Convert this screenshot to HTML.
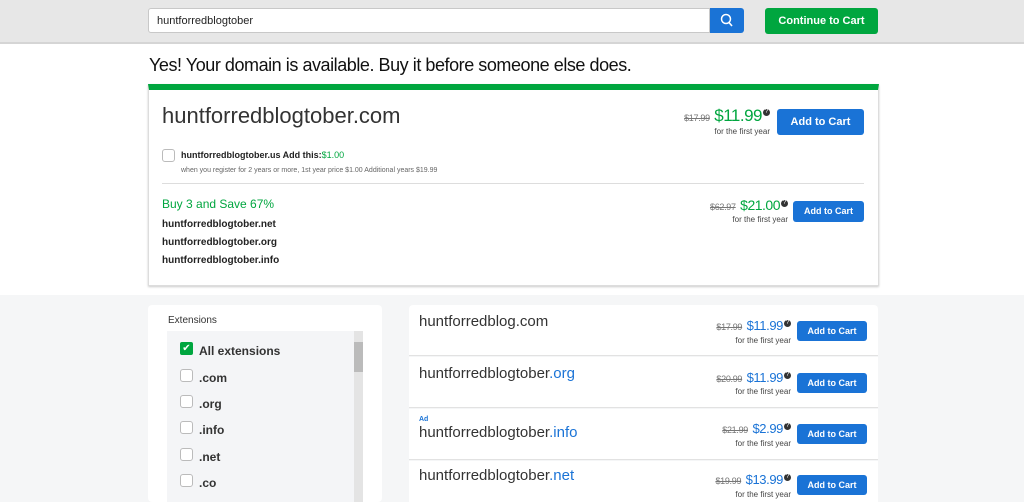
<!DOCTYPE html>
<html><head><meta charset="utf-8"><style>
*{box-sizing:border-box;margin:0;padding:0}
html,body{width:1024px;height:502px;overflow:hidden}
body{background:#fff;font-family:"Liberation Sans",sans-serif;color:#222;position:relative}
.a{position:absolute;white-space:nowrap}
.r{position:absolute;white-space:nowrap;text-align:right}
.btn{position:absolute;background:#1a73d6;color:#fff;border-radius:3px;font-size:11px;font-weight:bold;text-align:center}
.q{display:inline-block;width:7px;height:7px;border-radius:50%;background:#333;color:#fff;font-size:6px;line-height:7px;text-align:center;vertical-align:top;margin-top:3px;margin-left:1px}
.old{text-decoration:line-through;color:#777;font-size:9px;letter-spacing:-0.3px}
.sm{font-size:8px;color:#444}
.cb{position:absolute;width:13px;height:13px;border:1px solid #bbb;border-radius:3px;background:#fff}
.ext{position:absolute;font-size:12px;font-weight:bold;color:#333}
.row{position:absolute;left:409px;width:469px;background:#fff;border-bottom:1px solid #e2e2e2}
.blue{color:#1a73d6}
</style></head><body>
<div class="a" style="left:0;top:0;width:1024px;height:44px;background:#e7e7e7;border-bottom:2px solid #d5d5d5"></div>
<div class="a" style="left:148px;top:8px;width:562px;height:25px;background:#fff;border:1px solid #c8c8c8;border-radius:3px 0 0 3px;font-size:11px;padding:6px 0 0 8px">huntforredblogtober</div>
<div class="a" style="left:710px;top:8px;width:34px;height:25px;background:#1a73d6;border-radius:0 3px 3px 0"><svg width="34" height="25"><circle cx="16" cy="11" r="4.5" fill="none" stroke="#fff" stroke-width="1.5"/><line x1="19" y1="14.5" x2="22" y2="18" stroke="#fff" stroke-width="1.6"/></svg></div>
<div class="a" style="left:765px;top:8px;width:113px;height:26px;background:#00a63f;border-radius:3px;color:#fff;font-size:11px;font-weight:bold;text-align:center;line-height:26px">Continue to Cart</div>
<div class="a" style="left:149px;top:55px;font-size:18px;color:#111;letter-spacing:-0.45px">Yes! Your domain is available. Buy it before someone else does.</div>
<div class="a" style="left:148px;top:84px;width:731px;height:202px;border:1px solid #ddd;border-top:6px solid #00a63f;box-shadow:0 1px 2px #ccc"></div>
<div class="a" style="left:162px;top:103px;font-size:22px;color:#333">huntforredblogtober.com</div>
<div class="r" style="right:254px;top:106px"><span class="old">$17.99</span> <span style="color:#00a63f;font-size:17px;letter-spacing:-0.5px">$11.99</span><span class="q">?</span></div>
<div class="r sm" style="right:254px;top:127px">for the first year</div>
<div class="btn" style="left:777px;top:109px;width:87px;height:26px;line-height:26px">Add to Cart</div>
<div class="cb" style="left:162px;top:149px"></div>
<div class="a" style="left:181px;top:150px;font-size:9px;font-weight:bold">huntforredblogtober.us Add this:<span style="color:#00a63f;font-weight:normal">$1.00</span></div>
<div class="a" style="left:181px;top:167px;font-size:7px;color:#666">when you register for 2 years or more, 1st year price $1.00 Additional years $19.99</div>
<div class="a" style="left:162px;top:183px;width:702px;height:1px;background:#ddd"></div>
<div class="a" style="left:162px;top:197px;font-size:12px;color:#00a63f">Buy 3 and Save 67%</div>
<div class="a" style="left:162px;top:219px;font-size:10px;font-weight:bold">huntforredblogtober.net</div>
<div class="a" style="left:162px;top:237px;font-size:10px;font-weight:bold">huntforredblogtober.org</div>
<div class="a" style="left:162px;top:255px;font-size:10px;font-weight:bold">huntforredblogtober.info</div>
<div class="r" style="right:236px;top:197px"><span class="old">$62.97</span> <span style="color:#00a63f;font-size:14px;letter-spacing:-0.5px">$21.00</span><span class="q">?</span></div>
<div class="r sm" style="right:236px;top:215px">for the first year</div>
<div class="btn" style="left:793px;top:201px;width:71px;height:21px;line-height:21px;font-size:9px">Add to Cart</div>
<div class="a" style="left:0;top:295px;width:1024px;height:207px;background:#f5f6f7"></div>
<div class="a" style="left:148px;top:305px;width:234px;height:197px;background:#fff;border-radius:4px"></div>
<div class="a" style="left:168px;top:315px;font-size:10px;color:#333">Extensions</div>
<div class="a" style="left:167px;top:331px;width:196px;height:171px;background:#f4f5f7"></div>
<div class="a" style="left:354px;top:331px;width:9px;height:171px;background:#e4e4e4"></div>
<div class="a" style="left:354px;top:342px;width:9px;height:30px;background:#bbb"></div>
<div class="a" style="left:180px;top:342px;width:13px;height:13px;background:#00a63f;border-radius:2px;color:#fff;font-size:10px;line-height:13px;text-align:center">✔</div>
<div class="ext" style="left:199px;top:344px">All extensions</div>
<div class="cb" style="left:180px;top:369px"></div><div class="ext" style="left:199px;top:371px">.com</div>
<div class="cb" style="left:180px;top:395px"></div><div class="ext" style="left:199px;top:397px">.org</div>
<div class="cb" style="left:180px;top:421px"></div><div class="ext" style="left:199px;top:423px">.info</div>
<div class="cb" style="left:180px;top:448px"></div><div class="ext" style="left:199px;top:450px">.net</div>
<div class="cb" style="left:180px;top:474px"></div><div class="ext" style="left:199px;top:476px">.co</div>

<div class="row" style="top:305px;height:51px;border-radius:4px 4px 0 0"></div>
<div class="row" style="top:357px;height:51px"></div>
<div class="row" style="top:409px;height:51px"></div>
<div class="row" style="top:461px;height:41px;border-bottom:none"></div>

<div class="a" style="left:419px;top:313px;font-size:15px;color:#333">huntforredblog.com</div>
<div class="a" style="left:419px;top:365px;font-size:15px;color:#333">huntforredblogtober<span class="blue">.org</span></div>
<div class="a blue" style="left:419px;top:416px;font-size:7px;font-weight:bold">Ad</div>
<div class="a" style="left:419px;top:424px;font-size:15px;color:#333">huntforredblogtober<span class="blue">.info</span></div>
<div class="a" style="left:419px;top:467px;font-size:15px;color:#333">huntforredblogtober<span class="blue">.net</span></div>

<div class="r" style="right:233px;top:317px"><span class="old">$17.99</span> <span class="blue" style="font-size:13px;letter-spacing:-0.4px">$11.99</span><span class="q">?</span></div>
<div class="r sm" style="right:233px;top:336px">for the first year</div>
<div class="btn" style="left:797px;top:321px;width:70px;height:20px;line-height:20px;font-size:9px">Add to Cart</div>
<div class="r" style="right:233px;top:369px"><span class="old">$20.99</span> <span class="blue" style="font-size:13px;letter-spacing:-0.4px">$11.99</span><span class="q">?</span></div>
<div class="r sm" style="right:233px;top:387px">for the first year</div>
<div class="btn" style="left:797px;top:373px;width:70px;height:20px;line-height:20px;font-size:9px">Add to Cart</div>
<div class="r" style="right:233px;top:420px"><span class="old">$21.99</span> <span class="blue" style="font-size:13px;letter-spacing:-0.4px">$2.99</span><span class="q">?</span></div>
<div class="r sm" style="right:233px;top:439px">for the first year</div>
<div class="btn" style="left:797px;top:424px;width:70px;height:20px;line-height:20px;font-size:9px">Add to Cart</div>
<div class="r" style="right:233px;top:471px"><span class="old">$19.99</span> <span class="blue" style="font-size:13px;letter-spacing:-0.4px">$13.99</span><span class="q">?</span></div>
<div class="r sm" style="right:233px;top:490px">for the first year</div>
<div class="btn" style="left:797px;top:475px;width:70px;height:20px;line-height:20px;font-size:9px">Add to Cart</div>
</body></html>
